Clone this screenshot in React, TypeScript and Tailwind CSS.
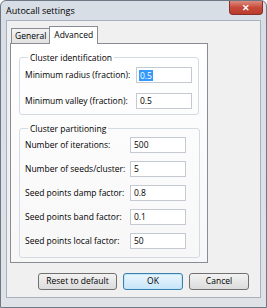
const font = { fontFamily: '"Open Sans", "Noto Sans", sans-serif' };

function Field({ label, value, selected, labelW }: { label: string; value: string; selected?: boolean; labelW: string }) {
  return (
    <div className="flex items-center h-[16px]">
      <span className={"text-[8.5px] text-black whitespace-nowrap " + labelW}>{label}</span>
      <div className="w-[56px] h-[16px] bg-white border border-[#c5cad2] flex items-center pl-[2px] text-[8.5px]">
        {selected ? <span className="bg-[#3399ff] text-white leading-[11px] px-[1px]">{value}</span> : <span className="px-[1px]">{value}</span>}
      </div>
    </div>
  );
}

function Group({ title, children, className }: { title: string; children: React.ReactNode; className?: string }) {
  return (
    <fieldset className={"border border-[#d5dbe2] rounded-[3px] pl-[5px] " + (className ?? "")}>
      <legend className="text-[8.5px] ml-[3px] px-[2px] leading-[11px] whitespace-nowrap">{title}</legend>
      {children}
    </fieldset>
  );
}

export default function App() {
  return (
    <div className="w-[267px] h-[308px] bg-gradient-to-b from-[#d8dee6] to-[#dfe3e8] border border-[#6e7885] rounded-t-[6px] flex flex-col" style={font}>
      <div className="h-[19px] flex items-start justify-between pl-[5px]">
        <span className="text-[9px] text-black leading-[12px] mt-[4px]">Autocall settings</span>
        <div className="w-[34px] h-[14px] mr-[3px] rounded-b-[4px] border border-[#8b2d2d] border-t-0 bg-gradient-to-b from-[#d98b7e] via-[#c7493a] to-[#b83b2c] flex items-center justify-center">
          <span className="text-white text-[9px] font-bold leading-none">✕</span>
        </div>
      </div>
      <div className="mx-[5px] h-[278px] bg-[#f0f0f0] border border-[#a9b2bc] flex flex-col">
        <div className="pl-[3px] pt-[4px]">
          <div className="flex items-end h-[18px] pl-[1px]">
            <div className="h-[15px] px-[3px] border border-b-0 border-[#898c95] bg-gradient-to-b from-[#f3f3f3] to-[#e2e2e2] text-[8.5px] leading-[14px]">General</div>
            <div className="h-[18px] px-[4px] border border-b-0 border-[#898c95] -ml-[1px] bg-white text-[8.5px] leading-[16px] relative z-10 -mb-[1px]">Advanced</div>
          </div>
          <div className="w-[198px] h-[220px] border border-[#898c95] bg-gradient-to-b from-[#ffffff] to-[#f7f7f7] px-[8px] pt-[8px]">
            <Group title="Cluster identification" className="pb-[5px] pr-[6px]">
              <div className="flex flex-col gap-[10px] mt-[4px]">
                <Field label="Minimum radius (fraction):" value="0.5" selected labelW="w-[111px]" />
                <Field label="Minimum valley (fraction):" value="0.5" labelW="w-[111px]" />
              </div>
            </Group>
            <Group title="Cluster partitioning" className="mt-[8px] pb-[8px] pr-[13px]">
              <div className="flex flex-col gap-[8px] mt-[3px]">
                <Field label="Number of iterations:" value="500" labelW="w-[105px]" />
                <Field label="Number of seeds/cluster:" value="5" labelW="w-[105px]" />
                <Field label="Seed points damp factor:" value="0.8" labelW="w-[105px]" />
                <Field label="Seed points band factor:" value="0.1" labelW="w-[105px]" />
                <Field label="Seed points local factor:" value="50" labelW="w-[105px]" />
              </div>
            </Group>
          </div>
        </div>
        <div className="flex justify-end gap-[6px] pr-[11px] mt-[10px]">
          <button className="w-[79px] h-[17px] rounded-[3px] border border-[#707070] bg-gradient-to-b from-[#f2f2f2] to-[#dcdcdc] text-[8.5px] leading-none whitespace-nowrap">Reset to default</button>
          <button className="w-[60px] h-[17px] rounded-[3px] border border-[#3c7fb1] bg-gradient-to-b from-[#eaf6fd] to-[#c7e5f9] text-[8.5px] leading-none shadow-[inset_0_0_0_1px_#c0e4f8]">OK</button>
          <button className="w-[60px] h-[17px] rounded-[3px] border border-[#707070] bg-gradient-to-b from-[#f2f2f2] to-[#dcdcdc] text-[8.5px] leading-none">Cancel</button>
        </div>
      </div>
    </div>
  );
}
